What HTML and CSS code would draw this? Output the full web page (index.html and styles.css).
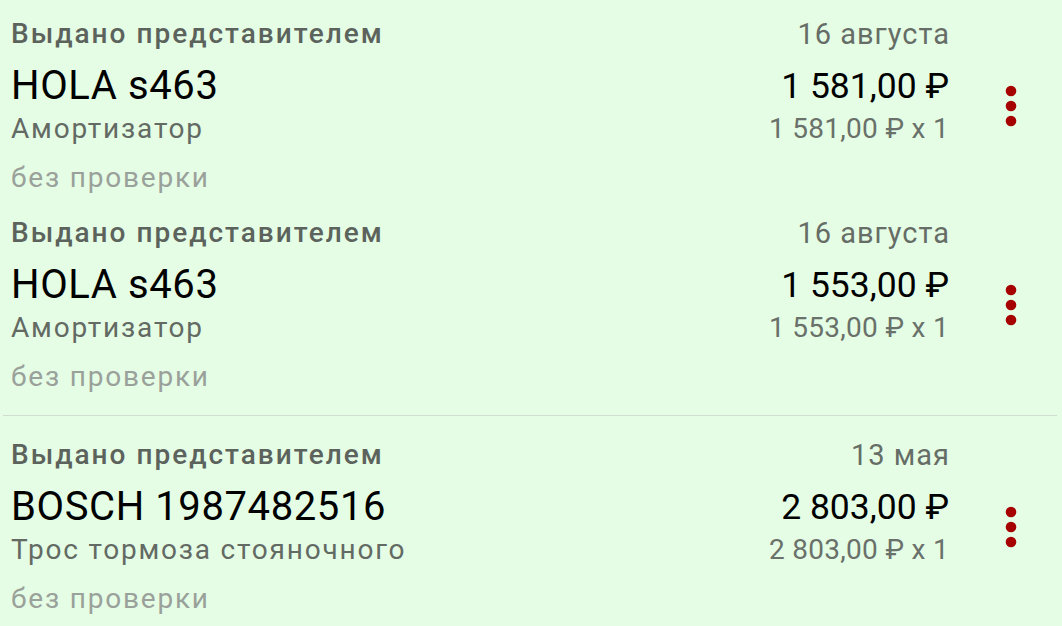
FILE: index.html
```html
<!DOCTYPE html>
<html lang="ru">
<head>
<meta charset="utf-8">
<link rel="stylesheet" href="styles.css">
</head>
<body>
<div class="list">
  <div class="group">
    <div class="item">
      <div class="head">Выдано представителем</div>
      <div class="date">16 августа</div>
      <div class="menu-cell"><svg class="kebab" width="12" height="42" viewBox="0 0 12 42"><circle cx="6" cy="6" r="5.3"/><circle cx="6" cy="21" r="5.3"/><circle cx="6" cy="36" r="5.3"/></svg></div>
      <div class="title">HOLA s463</div>
      <div class="price">1 581,00 ₽</div>
      <div class="sub">Амортизатор</div>
      <div class="unit">1 581,00 ₽ x 1</div>
      <div class="status">без проверки</div>
    </div>
    <div class="item">
      <div class="head">Выдано представителем</div>
      <div class="date">16 августа</div>
      <div class="menu-cell"><svg class="kebab" width="12" height="42" viewBox="0 0 12 42"><circle cx="6" cy="6" r="5.3"/><circle cx="6" cy="21" r="5.3"/><circle cx="6" cy="36" r="5.3"/></svg></div>
      <div class="title">HOLA s463</div>
      <div class="price">1 553,00 ₽</div>
      <div class="sub">Амортизатор</div>
      <div class="unit">1 553,00 ₽ x 1</div>
      <div class="status">без проверки</div>
    </div>
  </div>
  <div class="group group-next">
    <div class="item">
      <div class="head">Выдано представителем</div>
      <div class="date">13 мая</div>
      <div class="menu-cell"><svg class="kebab" width="12" height="42" viewBox="0 0 12 42"><circle cx="6" cy="6" r="5.3"/><circle cx="6" cy="21" r="5.3"/><circle cx="6" cy="36" r="5.3"/></svg></div>
      <div class="title">BOSCH 1987482516</div>
      <div class="price">2 803,00 ₽</div>
      <div class="sub">Трос тормоза стояночного</div>
      <div class="unit">2 803,00 ₽ x 1</div>
      <div class="status">без проверки</div>
    </div>
  </div>
</div>
</body>
</html>
```

FILE: styles.css
```css
html, body {
  margin: 0;
  padding: 0;
  background: #e5fde5;
  font-family: Roboto, "Noto Sans", "Liberation Sans", sans-serif;
  overflow: hidden;
}

.list {
  padding-top: 10px;
}

.group-next {
  border-top: 1px solid #d2ddd2;
  margin: 7px 5px 0 3px;
  padding-top: 15px;
}

.item {
  display: grid;
  grid-template-columns: 1fr auto 113px;
  grid-template-rows: 48px 56px 30px 65px;
  padding-left: 11px;
}

.group-next .item {
  grid-template-columns: 1fr auto 108px;
  grid-template-rows: 48px 56px 30px 68px;
  padding-left: 8px;
}

.head {
  grid-column: 1;
  grid-row: 1;
  font-size: 28px;
  line-height: 48px;
  font-weight: 500;
  letter-spacing: 2px;
  color: #5c635c;
  white-space: nowrap;
}

.date {
  grid-column: 2;
  grid-row: 1;
  text-align: right;
  font-size: 29px;
  line-height: 48px;
  letter-spacing: 1px;
  margin-right: -1px;
  color: #666d66;
}

.title {
  grid-column: 1;
  grid-row: 2;
  font-size: 40px;
  line-height: 56px;
  letter-spacing: 0.6px;
  color: #000;
}

.price {
  grid-column: 2;
  grid-row: 2;
  text-align: right;
  font-size: 35.5px;
  line-height: 56px;
  color: #000;
}

.sub {
  grid-column: 1;
  grid-row: 3;
  font-size: 28px;
  line-height: 30px;
  letter-spacing: 1.8px;
  color: #636a63;
  white-space: nowrap;
}

.unit {
  grid-column: 2;
  grid-row: 3;
  text-align: right;
  font-size: 28px;
  line-height: 30px;
  letter-spacing: 0.3px;
  color: #6a716a;
}

.status {
  grid-column: 1 / 3;
  grid-row: 4;
  font-size: 28px;
  line-height: 68px;
  letter-spacing: 1.8px;
  color: #9aa19a;
}

.menu-cell {
  grid-column: 3;
  grid-row: 2 / 4;
  padding-left: 56px;
  padding-top: 27px;
}

.kebab {
  display: block;
  fill: #a60000;
}
```
